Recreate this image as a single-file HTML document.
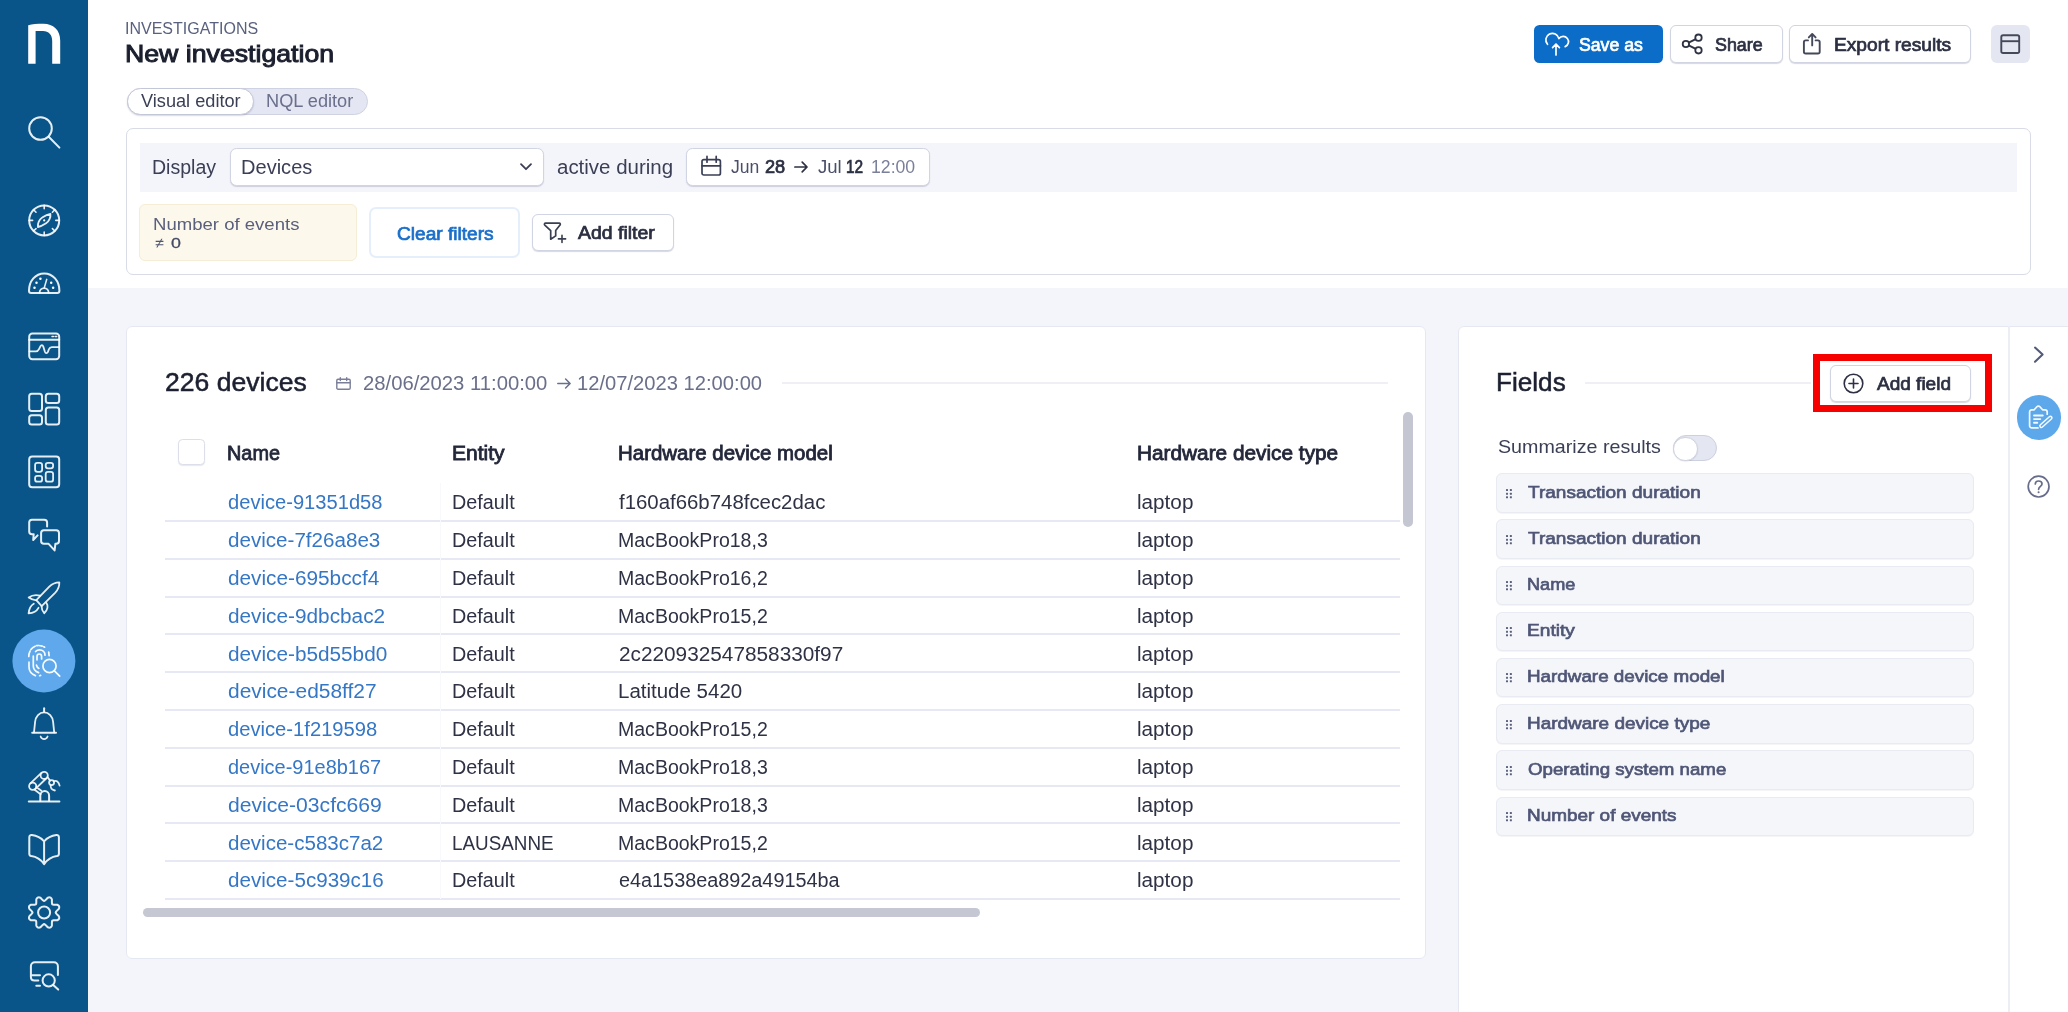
<!DOCTYPE html>
<html>
<head>
<meta charset="utf-8">
<title>New investigation</title>
<style>
*{box-sizing:border-box;margin:0;padding:0}
html,body{width:2068px;height:1012px;overflow:hidden}
html{background:#fff}
#pg{position:absolute;left:0;top:0;width:2068px;height:1012px;overflow:hidden;filter:blur(.45px)}
body{font-family:"Liberation Sans",sans-serif;background:#f4f5fa;color:#1f2333;position:relative}
.a{position:absolute}
.t{position:absolute;white-space:nowrap;line-height:1;transform-origin:0 0}
#side{position:absolute;left:0;top:0;width:88px;height:1012px;background:#09558a}
svg{position:absolute;overflow:visible}
#top{position:absolute;left:88px;top:0;width:1980px;height:287.5px;background:#fff}
.btn{position:absolute;border:1.5px solid #d1d4e2;border-radius:6px;background:#fff;box-shadow:0 1px 1px rgba(60,65,100,.2)}
.card{position:absolute;background:#fff;border:1px solid #e6e8f1;border-radius:6px}
.rl{position:absolute;left:165px;width:1235px;height:2px;background:#e6e8f3}
.fld{position:absolute;left:1496px;width:478px;height:39.4px;background:#f5f6fa;border:1px solid #e9ebf3;border-radius:6px;box-shadow:0 1px 0 rgba(60,65,100,.05)}
.fld i{position:absolute;left:8.9px;top:14.4px;width:2px;height:2px;border-radius:.5px;background:#5a5f7c;box-shadow:3.85px 0 #5a5f7c,0 3.65px #5a5f7c,3.85px 3.65px #5a5f7c,0 7.3px #5a5f7c,3.85px 7.3px #5a5f7c}
</style>
</head>
<body>
<div id="pg">
<div id="side">
<svg style="left:0;top:0" width="88" height="1012" viewBox="0 0 88 1012" fill="none" stroke="#fff" stroke-opacity=".9" stroke-width="2" stroke-linecap="round" stroke-linejoin="round">
<!-- logo -->
<path d="M28.2 63.8V25.2c4-.9 9-1.4 15.3-1.4 9.7 0 16.7 6.3 16.7 16.7v23.3h-8V41c0-6.2-3.5-9.9-9.2-9.9h-7.4v32.7z" fill="#fff" stroke="none"/>
<!-- search -->
<circle cx="40.5" cy="128.5" r="11.3"/><path d="M48.7 136.7L59.4 147.6"/>
<!-- compass -->
<circle cx="44.2" cy="220.4" r="15"/><path d="M44.2 205.4L44.2 208.8M54.81 209.79L52.4 212.2M59.2 220.4L55.8 220.4M54.81 231.01L52.4 228.6M44.2 235.4L44.2 232M33.59 231.01L36 228.6M29.2 220.4L32.6 220.4M33.59 209.79L36 212.2" stroke-width="1.6"/>
<path d="M50.4 213.8c.5 3.4-1.4 7.7-4.3 9.5-2.6 1.7-5.6 3.2-8.2 3.7-.5-3.4 1.4-7.7 4.3-9.5 2.6-1.7 5.6-3.2 8.2-3.7z" stroke-width="1.8"/><circle cx="44.2" cy="220.4" r="1.1" fill="#fff" stroke="none"/>
<!-- gauge -->
<path d="M31.2 293h26c1.3 0 2.2-.9 2.2-2.2 0-9.7-6.5-17.4-15.2-17.4S29 281.1 29 290.8c0 1.3.9 2.2 2.2 2.2z"/>
<path d="M39.6 292.6c0-2.5 2-4.4 4.5-4.4s4.5 1.9 4.5 4.4" stroke-width="1.8"/><path d="M44.4 287.4l2.3-8" stroke-width="1.6"/>
<g fill="#fff" stroke="none"><circle cx="40.4" cy="278.7" r="1.25"/><circle cx="36.5" cy="282.8" r="1.25"/><circle cx="34.5" cy="287.8" r="1.25"/><circle cx="51.2" cy="282.8" r="1.25"/><circle cx="53.1" cy="287.8" r="1.25"/></g>
<!-- monitor -->
<rect x="29.2" y="333.6" width="30" height="25.6" rx="3.2"/><path d="M29.2 339.7h30"/><path d="M52 336.6h1.5M55.2 336.6h1.5" stroke-width="1.5"/>
<path d="M29.5 351.3h6.5c1.6 0 2.3-.8 3-2.2l1.5-2.9c.8-1.5 2-1.5 2.7.1l1.7 5.4c.7 1.9 2.2 2 3 .2l1-2.6c.6-1.5 1.3-2.2 2.9-2.2h7" stroke-width="1.8"/>
<!-- dashboard -->
<rect x="29.2" y="393.8" width="12.8" height="17.3" rx="2.5"/><rect x="45.8" y="393.8" width="13.4" height="9.3" rx="2.5"/><rect x="29.2" y="415.2" width="12.8" height="9.2" rx="2.5"/><rect x="45.8" y="407.5" width="13.4" height="16.9" rx="2.5"/>
<!-- grid -->
<rect x="29.2" y="456.6" width="30" height="30.6" rx="3"/>
<g stroke-width="1.8"><rect x="35.1" y="462.8" width="7" height="9.1" rx="2.3"/><rect x="45.7" y="462.8" width="7.4" height="5.6" rx="2.3"/><rect x="35.1" y="475.8" width="7" height="5.9" rx="2.3"/><rect x="45.7" y="471.9" width="7.4" height="9.8" rx="2.3"/></g>
<!-- chat -->
<path d="M47.1 526.6v-4c0-1.6-1.2-2.8-2.8-2.8H32c-1.6 0-2.8 1.2-2.8 2.8v8.8c0 1.6 1.2 2.8 2.8 2.8h1.7l-.5 5.8 4.4-4.6"/>
<path d="M43.9 530.2h12.3c1.6 0 2.8 1.2 2.8 2.8v8c0 1.6-1.2 2.8-2.8 2.8h-.800l-.8 6.6-6-6.6h-4.7c-1.6 0-2.8-1.2-2.8-2.8v-8c0-1.6 1.2-2.8 2.8-2.8z"/>
<!-- rocket -->
<path d="M36.3 600.2l13-13.5c3-3 6.7-4.3 10-4.3.2 3.4-1 7-4 10.2l-13.6 13.6z" stroke-width="1.8"/>
<path d="M40.2 595.6c-4-1-8.4-.5-11.5 1.9 2.4 1.7 5 2.6 7.6 2.8M46.5 603c1.8 2.6 1.4 7-2.3 10.2-1.8-2-2.6-4.5-2.6-6.8M33.8 603.8c-2.9 1.6-4.7 5.2-5.2 9.5 4-.3 8.2-2.3 9.9-5.5" stroke-width="1.8"/>
<!-- active circle -->
<circle cx="43.9" cy="661" r="31.5" fill="#5fa8eb" stroke="none"/>
<g stroke-width="1.7" stroke-opacity=".95">
<path d="M28.8 656.4c0-6 4.2-10.9 9.8-10.9 2.2 0 4.3.6 6 1.7" stroke-dasharray="5.5 1.7"/>
<path d="M48.7 652.1l.4 3.6"/>
<path d="M29 662.2v4.8c0 4 2.5 7 6.4 8.6"/>
<path d="M33.3 656v10c0 3 2 5.4 5.3 6.6"/>
<path d="M35.6 651.5c1-1.1 2.4-1.7 4-1.7 3.1 0 5.4 2.4 5.4 5.4"/>
<path d="M37 659.8v-3.3c0-1.5 1-2.5 2.3-2.5s2.3 1 2.3 2.5v2.4"/>
<path d="M36.5 665.2c.3 1.4 1.1 2.5 2.4 3.2"/>
<path d="M39.6 675.7l1-.3"/>
<circle cx="49.5" cy="666" r="6.6"/><path d="M54.4 670.8l5.3 5.4"/>
</g>
<!-- bell -->
<path d="M44.1 708.3v3.4"/><path d="M34 732.4l1.1-10.6c.5-5.4 4.2-9.5 9-9.5s8.5 4.1 9 9.5l1.1 10.6" stroke-width="1.8"/><path d="M32.2 732.8h23.8"/>
<path d="M40.6 736.5c.6 1.6 1.9 2.6 3.5 2.6s2.9-1 3.5-2.6" stroke-width="1.7"/>
<!-- robot arm -->
<path d="M28.8 801.4h30.6"/><path d="M40.3 801v-5.3c0-2.6 1.9-4.6 4.4-4.6s4.4 2 4.4 4.6v5.3"/>
<g stroke-width="1.8"><circle cx="44.2" cy="775.4" r="3.6"/><circle cx="32.7" cy="786.3" r="3.6"/><circle cx="51.6" cy="782.6" r="2.5"/>
<path d="M30.4 783.4l11-10.6M35.4 788.8l10.8-10.3M34.3 789.6l6.3 4.6M36.3 787l5 3.7M47.5 777.1l2.5 3.4M53.8 781.3c2.5-1.2 5 .3 5.8 4.4M50.7 785.2c-.3 2.8 1.3 4.9 4.2 5.3"/></g>
<!-- book -->
<path d="M44.1 841.3c-3.2-3.6-7.6-5.6-12.3-6.2-1.4-.2-2.5.8-2.5 2.2v16.5c0 1.2.8 2.1 2 2.3 4.9.7 9.4 3.3 12.8 8 3.4-4.7 7.9-7.3 12.8-8 1.2-.2 2-1.1 2-2.3v-16.5c0-1.4-1.1-2.4-2.5-2.2-4.7.6-9.1 2.6-12.3 6.2zM44.1 841.3v22.5"/>
<!-- gear -->
<path d="M44.10 900.90 L44.47 900.82 L44.85 900.60 L45.26 900.25 L45.70 899.82 L46.18 899.36 L46.69 898.94 L47.30 898.18 L47.89 897.76 L48.46 897.50 L49.01 897.37 L49.55 897.36 L50.06 897.45 L50.53 897.64 L50.95 897.94 L51.32 898.33 L51.62 898.82 L51.85 899.40 L51.96 900.11 L51.86 901.08 L51.92 901.74 L51.93 902.40 L51.94 903.02 L51.99 903.56 L52.10 903.98 L52.30 904.30 L52.62 904.50 L53.04 904.61 L53.58 904.66 L54.20 904.67 L54.86 904.68 L55.52 904.74 L56.49 904.64 L57.20 904.75 L57.78 904.98 L58.27 905.28 L58.66 905.65 L58.96 906.07 L59.15 906.54 L59.24 907.05 L59.23 907.59 L59.10 908.14 L58.84 908.71 L58.42 909.30 L57.66 909.91 L57.24 910.42 L56.78 910.90 L56.35 911.34 L56.00 911.75 L55.78 912.13 L55.70 912.50 L55.78 912.87 L56.00 913.25 L56.35 913.66 L56.78 914.10 L57.24 914.58 L57.66 915.09 L58.42 915.70 L58.84 916.29 L59.10 916.86 L59.23 917.41 L59.24 917.95 L59.15 918.46 L58.96 918.93 L58.66 919.35 L58.27 919.72 L57.78 920.02 L57.20 920.25 L56.49 920.36 L55.52 920.26 L54.86 920.32 L54.20 920.33 L53.58 920.34 L53.04 920.39 L52.62 920.50 L52.30 920.70 L52.10 921.02 L51.99 921.44 L51.94 921.98 L51.93 922.60 L51.92 923.26 L51.86 923.92 L51.96 924.89 L51.85 925.60 L51.62 926.18 L51.32 926.67 L50.95 927.06 L50.53 927.36 L50.06 927.55 L49.55 927.64 L49.01 927.63 L48.46 927.50 L47.89 927.24 L47.30 926.82 L46.69 926.06 L46.18 925.64 L45.70 925.18 L45.26 924.75 L44.85 924.40 L44.47 924.18 L44.10 924.10 L43.73 924.18 L43.35 924.40 L42.94 924.75 L42.50 925.18 L42.02 925.64 L41.51 926.06 L40.90 926.82 L40.31 927.24 L39.74 927.50 L39.19 927.63 L38.65 927.64 L38.14 927.55 L37.67 927.36 L37.25 927.06 L36.88 926.67 L36.58 926.18 L36.35 925.60 L36.24 924.89 L36.34 923.92 L36.28 923.26 L36.27 922.60 L36.26 921.98 L36.21 921.44 L36.10 921.02 L35.90 920.70 L35.58 920.50 L35.16 920.39 L34.62 920.34 L34.00 920.33 L33.34 920.32 L32.68 920.26 L31.71 920.36 L31.00 920.25 L30.42 920.02 L29.93 919.72 L29.54 919.35 L29.24 918.93 L29.05 918.46 L28.96 917.95 L28.97 917.41 L29.10 916.86 L29.36 916.29 L29.78 915.70 L30.54 915.09 L30.96 914.58 L31.42 914.10 L31.85 913.66 L32.20 913.25 L32.42 912.87 L32.50 912.50 L32.42 912.13 L32.20 911.75 L31.85 911.34 L31.42 910.90 L30.96 910.42 L30.54 909.91 L29.78 909.30 L29.36 908.71 L29.10 908.14 L28.97 907.59 L28.96 907.05 L29.05 906.54 L29.24 906.07 L29.54 905.65 L29.93 905.28 L30.42 904.98 L31.00 904.75 L31.71 904.64 L32.68 904.74 L33.34 904.68 L34.00 904.67 L34.62 904.66 L35.16 904.61 L35.58 904.50 L35.90 904.30 L36.10 903.98 L36.21 903.56 L36.26 903.02 L36.27 902.40 L36.28 901.74 L36.34 901.08 L36.24 900.11 L36.35 899.40 L36.58 898.82 L36.88 898.33 L37.25 897.94 L37.67 897.64 L38.14 897.45 L38.65 897.36 L39.19 897.37 L39.74 897.50 L40.31 897.76 L40.90 898.18 L41.51 898.94 L42.02 899.36 L42.50 899.82 L42.94 900.25 L43.35 900.60 L43.73 900.82Z"/><circle cx="44.1" cy="912.5" r="6"/>
<!-- search chat -->
<path d="M57.9 975v-8.7c0-2.3-1.7-4-4-4h-19c-2.3 0-4 1.7-4 4v10.6c0 2.1 1.5 3.5 3.6 3.5h3.8M31 975.3h9M36.3 985.7h3.7"/>
<circle cx="48.7" cy="980.4" r="6.1"/><path d="M53.2 984.9l5 4.7"/>
</svg>
</div>
<div id="top"></div>
<!-- tabs -->
<div class="a" style="left:126.5px;top:88px;width:241px;height:26.5px;border-radius:14px;background:#e4e6f3;border:1px solid #cfd2e2"></div>
<div class="a" style="left:126.5px;top:88px;width:127.5px;height:26.5px;border-radius:14px;background:#fff;border:1px solid #c4c7d8;box-shadow:0 1px 1.5px rgba(60,65,100,.2)"></div>
<!-- header buttons -->
<div class="a" style="left:1534.3px;top:25.2px;width:129.2px;height:37.6px;border-radius:5.5px;background:#0c6dc8"></div>
<div class="btn" style="left:1669.6px;top:25.2px;width:113.4px;height:37.4px"></div>
<div class="btn" style="left:1789.2px;top:25.2px;width:182.2px;height:37.4px"></div>
<div class="a" style="left:1990.5px;top:25.3px;width:39.7px;height:37.6px;border-radius:6px;background:#e4e6f2"></div>
<!-- save icon (cloud upload) -->
<svg style="left:0;top:0" width="2068" height="80" viewBox="0 0 2068 80" fill="none" stroke="#fff" stroke-width="1.7" stroke-linecap="round" stroke-linejoin="round">
<path d="M1547.5 44.3A6.6 6.6 0 1 1 1558.9 38.6A5.3 5.3 0 1 1 1565.2 46.6"/><path d="M1556 55V44.2M1552.6 47.7L1556 44.2l3.4 3.5"/>
</svg>
<!-- share icon -->
<svg style="left:0;top:0" width="2068" height="80" viewBox="0 0 2068 80" fill="none" stroke="#2e3344" stroke-width="1.8">
<circle cx="1698.5" cy="37.7" r="3.2"/><circle cx="1685.9" cy="44" r="3.2"/><circle cx="1698.5" cy="50.3" r="3.2"/><path d="M1688.7 42.6l7-3.5M1688.7 45.4l7 3.5"/>
</svg>
<!-- export icon -->
<svg style="left:0;top:0" width="2068" height="80" viewBox="0 0 2068 80" fill="none" stroke="#444959" stroke-width="1.9" stroke-linecap="round" stroke-linejoin="round">
<path d="M1808 40.4h-2.3a1.8 1.8 0 0 0-1.8 1.8v9.5a1.8 1.8 0 0 0 1.8 1.8h12.2a1.8 1.8 0 0 0 1.8-1.8v-9.5a1.8 1.8 0 0 0-1.8-1.8h-2.3"/><path d="M1812.2 45.4V34.2M1808.8 37.4l3.4-3.5 3.4 3.5"/>
</svg>
<!-- layout icon -->
<svg style="left:0;top:0" width="2068" height="80" viewBox="0 0 2068 80" fill="none" stroke="#444959" stroke-width="1.9">
<rect x="2001.3" y="35.2" width="17.9" height="17.8" rx="1.8"/><path d="M2001.3 41.2h17.9"/>
</svg>
<!-- filter box -->
<div class="a" style="left:126px;top:127.5px;width:1904.5px;height:147px;border:1.5px solid #d9dbe6;border-radius:7px;background:#fff"></div>
<div class="a" style="left:139.5px;top:142.5px;width:1877px;height:49.4px;background:#f4f5fa"></div>
<div class="btn" style="left:230px;top:148px;width:314px;height:37.5px;border-radius:6.5px"></div>
<svg style="left:520px;top:163px" width="12" height="8" viewBox="0 0 12 8" fill="none" stroke="#3a3f55" stroke-width="1.8" stroke-linecap="round" stroke-linejoin="round"><path d="M1 1.2l5 5 5-5"/></svg>
<div class="btn" style="left:685.5px;top:148px;width:244px;height:37.5px;border-radius:6.5px"></div>
<!-- calendar icon -->
<svg style="left:701px;top:156px" width="20" height="20" viewBox="0 0 20 20" fill="none" stroke="#3a3f55" stroke-width="1.7" stroke-linecap="round" stroke-linejoin="round">
<rect x="1" y="3.6" width="18.4" height="15.4" rx="1.8"/><path d="M1 9.8h18.4M6 .4v5.8M15.2 .4v5.8"/>
</svg>
<!-- arrow -->
<svg style="left:794px;top:161px" width="14" height="12" viewBox="0 0 14 12" fill="none" stroke="#2c3042" stroke-width="1.7" stroke-linecap="round" stroke-linejoin="round"><path d="M.900 6h12M8.2 1.2L13 6l-4.8 4.8"/></svg>
<!-- chip -->
<div class="a" style="left:139.3px;top:204px;width:217.5px;height:56.6px;border-radius:6px;background:#fcf9ec;border:1px solid #f7ecd4"></div>
<!-- clear filters -->
<div class="a" style="left:369px;top:207.4px;width:151px;height:50.6px;border-radius:7px;background:#fff;border:2px solid #e5effb"></div>
<!-- add filter -->
<div class="btn" style="left:532.2px;top:214.4px;width:142px;height:37px"></div>
<svg style="left:0;top:0" width="700" height="260" viewBox="0 0 700 260" fill="none" stroke="#3a3f50" stroke-width="1.7" stroke-linecap="round" stroke-linejoin="round">
<path d="M545.6 223.2h13.6c1 0 1.5 1.1.8 1.9l-4.3 5.5v5.3l-5 3.3v-8.6l-5.9-5.5c-.8-.8-.3-1.9.8-1.9z"/><path d="M562 235.3v7.2M558.4 238.9h7.2" stroke-width="1.6"/>
</svg>

<div class="card" style="left:126px;top:325.5px;width:1299.5px;height:633px"></div>
<div class="a" style="left:782px;top:382px;width:606px;height:1.5px;background:#eef0f6"></div>
<svg style="left:335.5px;top:377px" width="15" height="13" viewBox="0 0 15 13" fill="none" stroke="#7a7f99" stroke-width="1.4" stroke-linecap="round" stroke-linejoin="round"><rect x=".8" y="2.2" width="13.4" height="10" rx="1.2"/><path d="M.8 5.8h13.4M4.3 .7v2.8M10.7 .7v2.8"/></svg>
<svg style="left:556.5px;top:377.5px" width="14" height="11" viewBox="0 0 14 11" fill="none" stroke="#6a6f8a" stroke-width="1.5" stroke-linecap="round" stroke-linejoin="round"><path d="M.8 5.5h12.2M8.6 1l4.5 4.5-4.5 4.5"/></svg>
<div class="a" style="left:178.4px;top:439.2px;width:26.3px;height:26px;border:1.5px solid #dcdeea;border-radius:4.5px;background:#fff;box-shadow:0 1px 1px rgba(60,65,100,.12)"></div>
<div class="rl" style="top:520.10px"></div>
<div class="rl" style="top:557.88px"></div>
<div class="rl" style="top:595.66px"></div>
<div class="rl" style="top:633.44px"></div>
<div class="rl" style="top:671.22px"></div>
<div class="rl" style="top:709.00px"></div>
<div class="rl" style="top:746.78px"></div>
<div class="rl" style="top:784.56px"></div>
<div class="rl" style="top:822.34px"></div>
<div class="rl" style="top:860.12px"></div>
<div class="rl" style="top:897.90px"></div>
<div class="a" style="left:440.3px;top:483px;width:1px;height:416px;background:#f8f9fc"></div>
<div class="a" style="left:1402.5px;top:411.5px;width:10px;height:115px;border-radius:5px;background:#c4c7d2"></div>
<div class="a" style="left:142.5px;top:907.5px;width:837.5px;height:9.5px;border-radius:5px;background:#c5c8d3"></div>
<div class="a" style="left:1457.5px;top:325.5px;width:620px;height:700px;background:#fff;border:1px solid #e6e8f1;border-radius:6px 0 0 0"></div>
<div class="a" style="left:2008px;top:326px;width:2px;height:700px;background:#eceef6"></div>
<div class="a" style="left:1584.5px;top:382px;width:226px;height:1.5px;background:#eef0f6"></div>
<div class="a" style="left:1813px;top:354px;width:179px;height:58px;border:7px solid #f60000"></div>
<div class="btn" style="left:1830px;top:364.5px;width:140.5px;height:37px"></div>
<svg style="left:1842.5px;top:373px" width="21" height="21" viewBox="0 0 21 21" fill="none" stroke="#2c3042" stroke-width="1.6" stroke-linecap="round"><circle cx="10.5" cy="10.5" r="9.3"/><path d="M10.5 6v9M6 10.5h9"/></svg>
<div class="a" style="left:1673.1px;top:434.6px;width:44.3px;height:26px;border-radius:13px;background:#e4e6f2;border:1px solid #cdd0de"></div>
<div class="a" style="left:1673.4px;top:436.6px;width:24.2px;height:24px;border-radius:12.1px;background:#fff;border:1px solid #d0d3df;box-shadow:0 .5px 1px rgba(60,65,100,.15)"></div>
<div class="fld" style="top:473.2px"><i></i></div>
<div class="fld" style="top:519.4px"><i></i></div>
<div class="fld" style="top:565.6px"><i></i></div>
<div class="fld" style="top:611.8px"><i></i></div>
<div class="fld" style="top:658px"><i></i></div>
<div class="fld" style="top:704.2px"><i></i></div>
<div class="fld" style="top:750.4px"><i></i></div>
<div class="fld" style="top:796.6px"><i></i></div>
<svg style="left:0;top:300px" width="2068" height="220" viewBox="0 300 2068 220" fill="none" stroke="#525a7a" stroke-width="2.1" stroke-linecap="round" stroke-linejoin="round"><path d="M2035 347.6l7.6 7-7.6 7.1"/><g stroke="#666c8a" stroke-width="1.7"><circle cx="2038.6" cy="486.6" r="10.4"/><path d="M2035.3 484c0-1.8 1.4-3 3.3-3s3.4 1.2 3.4 2.9c0 2.3-3.4 2.6-3.4 5.4"/></g><circle cx="2038.6" cy="492.2" r="1.05" fill="#666c8a" stroke="none"/></svg>
<div class="a" style="left:2016.6px;top:395.4px;width:44.2px;height:44.2px;border-radius:50%;background:#5da8ea"></div>
<svg style="left:2016.6px;top:395.4px" width="44.2" height="44.2" viewBox="0 0 44.2 44.2" fill="none" stroke="#fff" stroke-opacity=".93" stroke-width="1.7" stroke-linecap="round" stroke-linejoin="round">
<path d="M30.2 19.2V17a2.2 2.2 0 0 0-2.2-2.2h-2.4l-2.7-3c-.8-.9-2.2-.9-3 0l-2.7 3h-2.4a2.2 2.2 0 0 0-2.2 2.2v13.7a2.2 2.2 0 0 0 2.2 2.2h6.2"/>
<path d="M17 20.5h8.8M17 24.1h6.3M17 27.7h3.3" stroke-width="1.9"/>
<path d="M24.4 30.9l9-8" stroke-width="4.6"/><path d="M24.4 30.9l9-8" stroke="#5da8ea" stroke-opacity="1" stroke-width="1.5"/>
</svg>
<div class="t" style="left:125.39px;top:21px;font-size:15.8px;color:#59617f;transform:scaleX(1.0136)">INVESTIGATIONS</div>
<div class="t" style="left:125.39px;top:42px;font-size:24px;color:#1b1f2e;transform:scaleX(1.1117);-webkit-text-stroke:0.96px #1b1f2e">New investigation</div>
<div class="t" style="left:140.80px;top:93px;font-size:17.5px;color:#3a3f55;transform:scaleX(1.0379)">Visual editor</div>
<div class="t" style="left:265.56px;top:93px;font-size:17.5px;color:#6a6f8c;transform:scaleX(1.0395)">NQL editor</div>
<div class="t" style="left:1579.40px;top:36px;font-size:18.5px;color:#ffffff;transform:scaleX(0.9550);-webkit-text-stroke:0.74px #ffffff">Save as</div>
<div class="t" style="left:1715.30px;top:36px;font-size:18.5px;color:#2c3042;transform:scaleX(0.9658);-webkit-text-stroke:0.74px #2c3042">Share</div>
<div class="t" style="left:1834.36px;top:36px;font-size:18.5px;color:#2c3042;transform:scaleX(1.0362);-webkit-text-stroke:0.74px #2c3042">Export results</div>
<div class="t" style="left:151.92px;top:157px;font-size:20px;color:#3a3f55;transform:scaleX(0.9771)">Display</div>
<div class="t" style="left:240.70px;top:157px;font-size:20px;color:#3a3f55;transform:scaleX(1.0024)">Devices</div>
<div class="t" style="left:557.10px;top:157px;font-size:20px;color:#3a3f55;transform:scaleX(1.0234)">active during</div>
<div class="t" style="left:731.00px;top:158px;font-size:18px;color:#4a4f68;transform:scaleX(0.9746)">Jun</div>
<div class="t" style="left:765.00px;top:158px;font-size:18px;color:#2c3042;transform:scaleX(1.0095);-webkit-text-stroke:0.72px #2c3042">28</div>
<div class="t" style="left:817.80px;top:158px;font-size:18px;color:#4a4f68;transform:scaleX(1.0313)">Jul</div>
<div class="t" style="left:846.44px;top:158px;font-size:18px;color:#2c3042;transform:scaleX(0.8574);-webkit-text-stroke:0.72px #2c3042">12</div>
<div class="t" style="left:871.02px;top:158px;font-size:18px;color:#7a7f9a;transform:scaleX(0.9811)">12:00</div>
<div class="t" style="left:152.88px;top:216px;font-size:16.5px;color:#5a5f7c;transform:scaleX(1.1242)">Number of events</div>
<div class="t" style="left:154.60px;top:235px;font-size:15px;color:#4f5470;transform:scaleX(1.0625)">≠</div>
<div class="t" style="left:170.60px;top:235px;font-size:15px;color:#454a66;transform:scaleX(1.1875);-webkit-text-stroke:0.30px #454a66">0</div>
<div class="t" style="left:396.50px;top:225px;font-size:18px;color:#1a6fc9;transform:scaleX(1.0613);-webkit-text-stroke:0.72px #1a6fc9">Clear filters</div>
<div class="t" style="left:578.00px;top:224px;font-size:18px;color:#2c3042;transform:scaleX(1.0797);-webkit-text-stroke:0.72px #2c3042">Add filter</div>
<div class="t" style="left:164.94px;top:370px;font-size:25px;color:#1c2030;transform:scaleX(1.0620);-webkit-text-stroke:0.50px #1c2030">226 devices</div>
<div class="t" style="left:363.10px;top:374px;font-size:19.5px;color:#6a6f8a;transform:scaleX(1.0387)">28/06/2023 11:00:00</div>
<div class="t" style="left:577.07px;top:374px;font-size:19.5px;color:#6a6f8a;transform:scaleX(1.0344)">12/07/2023 12:00:00</div>
<div class="t" style="left:227.38px;top:444px;font-size:19.5px;color:#23273a;transform:scaleX(1.0185);-webkit-text-stroke:0.78px #23273a">Name</div>
<div class="t" style="left:451.72px;top:444px;font-size:19.5px;color:#23273a;transform:scaleX(1.0787);-webkit-text-stroke:0.78px #23273a">Entity</div>
<div class="t" style="left:617.65px;top:444px;font-size:19.5px;color:#23273a;transform:scaleX(1.0481);-webkit-text-stroke:0.78px #23273a">Hardware device model</div>
<div class="t" style="left:1136.63px;top:444px;font-size:19.5px;color:#23273a;transform:scaleX(1.0667);-webkit-text-stroke:0.78px #23273a">Hardware device type</div>
<div class="t" style="left:228.40px;top:493px;font-size:19.5px;color:#3577c5;transform:scaleX(1.0324)">device-91351d58</div>
<div class="t" style="left:452.19px;top:493px;font-size:19.5px;color:#2e3244;transform:scaleX(1.0136)">Default</div>
<div class="t" style="left:619.10px;top:493px;font-size:19.5px;color:#2e3244;transform:scaleX(1.0456)">f160af66b748fcec2dac</div>
<div class="t" style="left:1136.64px;top:493px;font-size:19.5px;color:#2e3244;transform:scaleX(1.0615)">laptop</div>
<div class="t" style="left:228.40px;top:531px;font-size:19.5px;color:#3577c5;transform:scaleX(1.0562)">device-7f26a8e3</div>
<div class="t" style="left:452.19px;top:531px;font-size:19.5px;color:#2e3244;transform:scaleX(1.0136)">Default</div>
<div class="t" style="left:618.10px;top:531px;font-size:19.5px;color:#2e3244;transform:scaleX(1.0011)">MacBookPro18,3</div>
<div class="t" style="left:1136.64px;top:531px;font-size:19.5px;color:#2e3244;transform:scaleX(1.0615)">laptop</div>
<div class="t" style="left:228.40px;top:569px;font-size:19.5px;color:#3577c5;transform:scaleX(1.0650)">device-695bccf4</div>
<div class="t" style="left:452.19px;top:569px;font-size:19.5px;color:#2e3244;transform:scaleX(1.0136)">Default</div>
<div class="t" style="left:618.10px;top:569px;font-size:19.5px;color:#2e3244;transform:scaleX(1.0011)">MacBookPro16,2</div>
<div class="t" style="left:1136.64px;top:569px;font-size:19.5px;color:#2e3244;transform:scaleX(1.0615)">laptop</div>
<div class="t" style="left:228.40px;top:607px;font-size:19.5px;color:#3577c5;transform:scaleX(1.0656)">device-9dbcbac2</div>
<div class="t" style="left:452.19px;top:607px;font-size:19.5px;color:#2e3244;transform:scaleX(1.0136)">Default</div>
<div class="t" style="left:618.10px;top:607px;font-size:19.5px;color:#2e3244;transform:scaleX(1.0011)">MacBookPro15,2</div>
<div class="t" style="left:1136.64px;top:607px;font-size:19.5px;color:#2e3244;transform:scaleX(1.0615)">laptop</div>
<div class="t" style="left:228.40px;top:645px;font-size:19.5px;color:#3577c5;transform:scaleX(1.0643)">device-b5d55bd0</div>
<div class="t" style="left:452.19px;top:645px;font-size:19.5px;color:#2e3244;transform:scaleX(1.0136)">Default</div>
<div class="t" style="left:619.10px;top:645px;font-size:19.5px;color:#2e3244;transform:scaleX(1.0657)">2c220932547858330f97</div>
<div class="t" style="left:1136.64px;top:645px;font-size:19.5px;color:#2e3244;transform:scaleX(1.0615)">laptop</div>
<div class="t" style="left:228.40px;top:682px;font-size:19.5px;color:#3577c5;transform:scaleX(1.0736)">device-ed58ff27</div>
<div class="t" style="left:452.19px;top:682px;font-size:19.5px;color:#2e3244;transform:scaleX(1.0136)">Default</div>
<div class="t" style="left:618.05px;top:682px;font-size:19.5px;color:#2e3244;transform:scaleX(1.0507)">Latitude 5420</div>
<div class="t" style="left:1136.64px;top:682px;font-size:19.5px;color:#2e3244;transform:scaleX(1.0615)">laptop</div>
<div class="t" style="left:228.40px;top:720px;font-size:19.5px;color:#3577c5;transform:scaleX(1.0352)">device-1f219598</div>
<div class="t" style="left:452.19px;top:720px;font-size:19.5px;color:#2e3244;transform:scaleX(1.0136)">Default</div>
<div class="t" style="left:618.10px;top:720px;font-size:19.5px;color:#2e3244;transform:scaleX(1.0011)">MacBookPro15,2</div>
<div class="t" style="left:1136.64px;top:720px;font-size:19.5px;color:#2e3244;transform:scaleX(1.0615)">laptop</div>
<div class="t" style="left:228.40px;top:758px;font-size:19.5px;color:#3577c5;transform:scaleX(1.0237)">device-91e8b167</div>
<div class="t" style="left:452.19px;top:758px;font-size:19.5px;color:#2e3244;transform:scaleX(1.0136)">Default</div>
<div class="t" style="left:618.10px;top:758px;font-size:19.5px;color:#2e3244;transform:scaleX(1.0011)">MacBookPro18,3</div>
<div class="t" style="left:1136.64px;top:758px;font-size:19.5px;color:#2e3244;transform:scaleX(1.0615)">laptop</div>
<div class="t" style="left:228.40px;top:796px;font-size:19.5px;color:#3577c5;transform:scaleX(1.0832)">device-03cfc669</div>
<div class="t" style="left:452.19px;top:796px;font-size:19.5px;color:#2e3244;transform:scaleX(1.0136)">Default</div>
<div class="t" style="left:618.10px;top:796px;font-size:19.5px;color:#2e3244;transform:scaleX(1.0011)">MacBookPro18,3</div>
<div class="t" style="left:1136.64px;top:796px;font-size:19.5px;color:#2e3244;transform:scaleX(1.0615)">laptop</div>
<div class="t" style="left:228.40px;top:834px;font-size:19.5px;color:#3577c5;transform:scaleX(1.0533)">device-c583c7a2</div>
<div class="t" style="left:452.23px;top:834px;font-size:19.5px;color:#2e3244;transform:scaleX(0.9663)">LAUSANNE</div>
<div class="t" style="left:618.10px;top:834px;font-size:19.5px;color:#2e3244;transform:scaleX(1.0011)">MacBookPro15,2</div>
<div class="t" style="left:1136.64px;top:834px;font-size:19.5px;color:#2e3244;transform:scaleX(1.0615)">laptop</div>
<div class="t" style="left:228.40px;top:871px;font-size:19.5px;color:#3577c5;transform:scaleX(1.0567)">device-5c939c16</div>
<div class="t" style="left:452.19px;top:871px;font-size:19.5px;color:#2e3244;transform:scaleX(1.0136)">Default</div>
<div class="t" style="left:619.10px;top:871px;font-size:19.5px;color:#2e3244;transform:scaleX(1.0168)">e4a1538ea892a49154ba</div>
<div class="t" style="left:1136.64px;top:871px;font-size:19.5px;color:#2e3244;transform:scaleX(1.0615)">laptop</div>
<div class="t" style="left:1495.51px;top:370px;font-size:25px;color:#1c2030;transform:scaleX(1.0454);-webkit-text-stroke:0.50px #1c2030">Fields</div>
<div class="t" style="left:1876.50px;top:376px;font-size:17.5px;color:#2c3042;transform:scaleX(1.0865);-webkit-text-stroke:0.70px #2c3042">Add field</div>
<div class="t" style="left:1498.10px;top:437px;font-size:19px;color:#3a3f55;transform:scaleX(1.0356)">Summarize results</div>
<div class="t" style="left:1528.20px;top:484px;font-size:17px;color:#4f5676;transform:scaleX(1.1190);-webkit-text-stroke:0.68px #4f5676">Transaction duration</div>
<div class="t" style="left:1528.20px;top:530px;font-size:17px;color:#4f5676;transform:scaleX(1.1190);-webkit-text-stroke:0.68px #4f5676">Transaction duration</div>
<div class="t" style="left:1527.13px;top:576px;font-size:17px;color:#4f5676;transform:scaleX(1.0662);-webkit-text-stroke:0.68px #4f5676">Name</div>
<div class="t" style="left:1527.07px;top:622px;font-size:17px;color:#4f5676;transform:scaleX(1.1257);-webkit-text-stroke:0.68px #4f5676">Entity</div>
<div class="t" style="left:1527.09px;top:668px;font-size:17px;color:#4f5676;transform:scaleX(1.1074);-webkit-text-stroke:0.68px #4f5676">Hardware device model</div>
<div class="t" style="left:1527.09px;top:715px;font-size:17px;color:#4f5676;transform:scaleX(1.1144);-webkit-text-stroke:0.68px #4f5676">Hardware device type</div>
<div class="t" style="left:1528.20px;top:761px;font-size:17px;color:#4f5676;transform:scaleX(1.0988);-webkit-text-stroke:0.68px #4f5676">Operating system name</div>
<div class="t" style="left:1527.09px;top:807px;font-size:17px;color:#4f5676;transform:scaleX(1.1140);-webkit-text-stroke:0.68px #4f5676">Number of events</div>
</div>
</body>
</html>
